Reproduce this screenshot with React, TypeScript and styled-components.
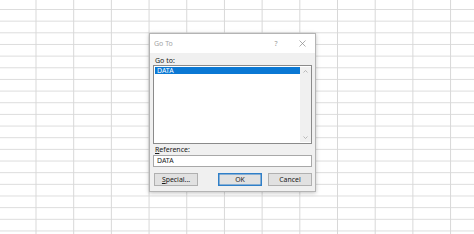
import styled, { createGlobalStyle } from 'styled-components';

const GlobalStyle = createGlobalStyle`
  html, body {
    margin: 0;
    padding: 0;
  }
  body {
    font-family: 'Noto Sans', 'Liberation Sans', sans-serif;
  }
`;

const Sheet = styled.div`
  width: 474px;
  height: 234px;
  box-sizing: border-box;
  padding: 33px 0 0 149px;
  background-color: #fff;
  background-image:
    linear-gradient(to right, #d8d8d8 1px, transparent 1px),
    linear-gradient(to bottom, #dcdcdc 1px, transparent 1px);
  background-size: 37.7px 11.67px;
  background-position: 35.5px 9px;
  overflow: hidden;
`;

const Dialog = styled.div`
  width: 167px;
  height: 159px;
  box-sizing: border-box;
  border: 1px solid #b4b4b4;
  background: #f0f0f0;
  box-shadow: 0 1px 4px rgba(0, 0, 0, 0.25);
  display: flex;
  flex-direction: column;
`;

const TitleBar = styled.div`
  height: 19px;
  flex-shrink: 0;
  background: #fff;
  display: flex;
  align-items: center;
  padding: 0 4px 0 4px;
  font-size: 7px;
  color: #a4a4a4;
`;

const Title = styled.span`
  flex: 1;
`;

const TitleButton = styled.span`
  width: 18px;
  display: flex;
  justify-content: center;
  align-items: center;
  color: #9a9a9a;
  margin-left: 8px;
`;

const Body = styled.div`
  flex: 1;
  padding: 2px 3px 5px 3px;
  display: flex;
  flex-direction: column;
`;

const Label = styled.div`
  font-size: 7px;
  color: #1a1a1a;
  height: 10px;
  line-height: 11px;
  padding-left: 2px;
`;

const ListBox = styled.div`
  height: 79px;
  flex-shrink: 0;
  box-sizing: border-box;
  border: 1px solid #8a8a8a;
  background: #fff;
  display: flex;
  padding: 1px 0 1px 1px;
`;

const ListItems = styled.div`
  flex: 1;
`;

const ListItem = styled.div<{ $selected?: boolean }>`
  height: 7px;
  line-height: 7px;
  font-size: 6.9px;
  padding-left: 2px;
  color: ${(p) => (p.$selected ? '#fff' : '#222')};
  background: ${(p) => (p.$selected ? '#0a78d4' : 'transparent')};
`;

const ScrollBar = styled.div`
  width: 11px;
  background: #f0f0f0;
  display: flex;
  flex-direction: column;
  justify-content: space-between;
  align-items: center;
  padding: 3px 0;
`;

const RefLabel = styled(Label)`
  height: 11px;
  line-height: 12px;
`;

const Input = styled.div`
  height: 12px;
  flex-shrink: 0;
  box-sizing: border-box;
  border: 1px solid #a8a8a8;
  background: #fff;
  font-size: 6.9px;
  line-height: 10px;
  padding-left: 3px;
  color: #222;
`;

const Buttons = styled.div`
  margin-top: 6px;
  display: flex;
  gap: 6px;
  padding-left: 1px;
`;

const Button = styled.div<{ $default?: boolean }>`
  width: 44px;
  height: 13px;
  box-sizing: border-box;
  border: 1px solid ${(p) => (p.$default ? '#2f7fc8' : '#b0b0b0')};
  box-shadow: ${(p) => (p.$default ? 'inset 0 0 0 0.5px #2f7fc8' : 'none')};
  background: #e1e1e1;
  font-size: 6.9px;
  color: #1a1a1a;
  display: flex;
  align-items: center;
  justify-content: center;
`;

const Spacer = styled.div`
  flex: 1;
`;

const Chevron = ({ up }: { up?: boolean }) => (
  <svg width="5" height="3" viewBox="0 0 5 3">
    <path
      d={up ? 'M0.5 2.5 L2.5 0.5 L4.5 2.5' : 'M0.5 0.5 L2.5 2.5 L4.5 0.5'}
      fill="none"
      stroke="#a0a0a0"
      strokeWidth="0.7"
    />
  </svg>
);

const App = () => {
  return (
    <>
      <GlobalStyle />
      <Sheet>
        <Dialog>
          <TitleBar>
            <Title>Go To</Title>
            <TitleButton>?</TitleButton>
            <TitleButton>
              <svg width="7" height="7" viewBox="0 0 7 7">
                <path d="M0.5 0.5 L6.5 6.5 M6.5 0.5 L0.5 6.5" stroke="#8a8a8a" strokeWidth="0.7" />
              </svg>
            </TitleButton>
          </TitleBar>
          <Body>
            <Label>Go to:</Label>
            <ListBox>
              <ListItems>
                <ListItem $selected>DATA</ListItem>
              </ListItems>
              <ScrollBar>
                <Chevron up />
                <Chevron />
              </ScrollBar>
            </ListBox>
            <RefLabel>
              <u>R</u>eference:
            </RefLabel>
            <Input>DATA</Input>
            <Buttons>
              <Button>
                <u>S</u>pecial...
              </Button>
              <Spacer />
              <Button $default>OK</Button>
              <Button>Cancel</Button>
            </Buttons>
          </Body>
        </Dialog>
      </Sheet>
    </>
  );
};

export default App;
